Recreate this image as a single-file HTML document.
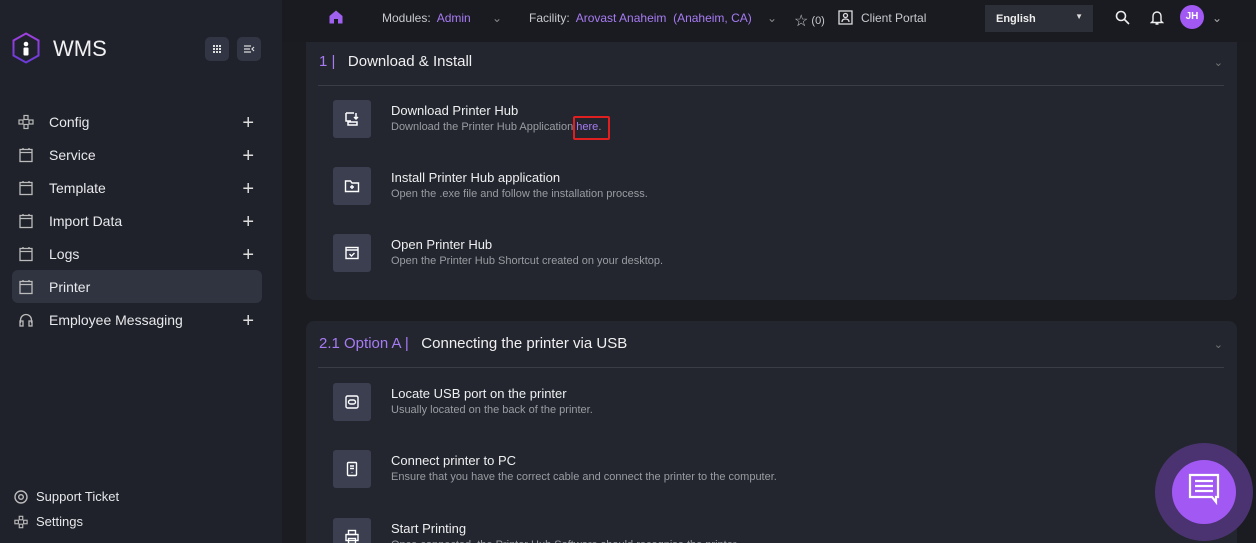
<!DOCTYPE html>
<html style="width:1256px;height:543px;overflow:hidden"><head><style>
*{box-sizing:border-box;margin:0;padding:0}
body{width:1256px;height:543px;overflow:hidden;background:#1b1c21;font-family:"Liberation Sans",sans-serif;color:#e6e7ea;position:relative}
.sb{position:absolute;left:0;top:0;width:282px;height:543px;background:#1f222a}
.logo{position:absolute;left:12px;top:32px}
.wms{position:absolute;left:53px;top:36px;font-size:22px;color:#f1f1f3}
.sbtn{position:absolute;top:37px;width:24px;height:24px;border-radius:5px;background:#323644}
.nav{position:absolute;left:12px;width:250px;height:33px;display:flex;align-items:center;font-size:14px;color:#e8e9ec}
.nav svg{margin-left:6px;margin-right:15px}
.nav .pl{position:absolute;right:8px;top:7px;font-size:20px;color:#ddd;font-weight:300}
.nav.act{background:#303440;border-radius:6px}
.top{position:absolute;left:282px;top:0;width:974px;height:42px;background:#1a1b21}
.tt{position:absolute;top:11px;font-size:12px;color:#c8c9cf;white-space:nowrap}
.pu{color:#a77bf3}
.card{position:absolute;left:306px;width:931px;background:#23262e;border-radius:8px;overflow:hidden}
.ch{position:absolute;left:13px;font-size:15px;color:#f0f0f2}
.div{position:absolute;left:12px;right:13px;height:1px;background:#3a3d46}
.item{position:absolute;left:27px}
.ib{position:absolute;left:0;top:0;width:38px;height:38px;background:#3b3f50;border-radius:3px;display:flex;align-items:center;justify-content:center}
.it{position:absolute;left:58px;top:3px;font-size:13px;color:#eeeff1;white-space:nowrap}
.id{position:absolute;left:58px;top:21px;font-size:11px;color:#9a9ca3;white-space:nowrap}
.chev{position:absolute;right:14px;color:#777;font-size:11px}
</style></head><body>
<div class="sb">
<svg class="logo" width="28" height="32" viewBox="0 0 28 32"><defs><linearGradient id="g" x1="0" y1="0" x2="0" y2="1"><stop offset="0" stop-color="#a040e0"/><stop offset="1" stop-color="#6a3bd8"/></linearGradient></defs><polygon points="14,1.5 26.5,8.5 26.5,23.5 14,30.5 1.5,23.5 1.5,8.5" fill="none" stroke="url(#g)" stroke-width="2"/><circle cx="14" cy="12" r="2.3" fill="#fff"/><rect x="11.5" y="15.5" width="5" height="8" rx="1" fill="#fff"/></svg>
<div class="wms">WMS</div>
<div class="sbtn" style="left:205px"><svg width="24" height="24"><g fill="#ddd"><rect x="8" y="8" width="2" height="2"/><rect x="11" y="8" width="2" height="2"/><rect x="14" y="8" width="2" height="2"/><rect x="8" y="11" width="2" height="2"/><rect x="11" y="11" width="2" height="2"/><rect x="14" y="11" width="2" height="2"/><rect x="8" y="14" width="2" height="2"/><rect x="11" y="14" width="2" height="2"/><rect x="14" y="14" width="2" height="2"/></g></svg></div>
<div class="sbtn" style="left:237px"><svg width="24" height="24"><path d="M7 9h7M7 12h6M7 15h7M17 10l-2 2 2 2" stroke="#ddd" stroke-width="1.2" fill="none"/></svg></div>
<div class="nav" style="top:105px"><svg width="16" height="16" viewBox="0 0 16 16" fill="none" stroke="#bbb" stroke-width="1.2"><rect x="6" y="1.5" width="4" height="4"/><rect x="1" y="6" width="4" height="4"/><rect x="11" y="6" width="4" height="4"/><rect x="6" y="10.5" width="4" height="4"/></svg>Config<span class="pl">+</span></div>
<div class="nav" style="top:138px"><svg width="16" height="16" viewBox="0 0 16 16" fill="none" stroke="#bbb" stroke-width="1.3"><rect x="2" y="2.5" width="12" height="12"/><path d="M2 5.5h12M5 1v2M11 1v2"/></svg>Service<span class="pl">+</span></div>
<div class="nav" style="top:171px"><svg width="16" height="16" viewBox="0 0 16 16" fill="none" stroke="#bbb" stroke-width="1.3"><rect x="2" y="2.5" width="12" height="12"/><path d="M2 5.5h12M5 1v2M11 1v2"/></svg>Template<span class="pl">+</span></div>
<div class="nav" style="top:204px"><svg width="16" height="16" viewBox="0 0 16 16" fill="none" stroke="#bbb" stroke-width="1.3"><rect x="2" y="2.5" width="12" height="12"/><path d="M2 5.5h12M5 1v2M11 1v2"/></svg>Import Data<span class="pl">+</span></div>
<div class="nav" style="top:237px"><svg width="16" height="16" viewBox="0 0 16 16" fill="none" stroke="#bbb" stroke-width="1.3"><rect x="2" y="2.5" width="12" height="12"/><path d="M2 5.5h12M5 1v2M11 1v2"/></svg>Logs<span class="pl">+</span></div>
<div class="nav act" style="top:270px"><svg width="16" height="16" viewBox="0 0 16 16" fill="none" stroke="#bbb" stroke-width="1.3"><rect x="2" y="2.5" width="12" height="12"/><path d="M2 5.5h12M5 1v2M11 1v2"/></svg>Printer</div>
<div class="nav" style="top:303px"><svg width="16" height="16" viewBox="0 0 16 16" fill="none" stroke="#bbb" stroke-width="1.3"><path d="M2.5 11V8a5.5 5.5 0 0 1 11 0v3"/><rect x="2" y="9" width="3" height="5"/><rect x="11" y="9" width="3" height="5"/></svg>Employee Messaging<span class="pl">+</span></div>
<div style="position:absolute;left:14px;top:489px;font-size:13px;display:flex;align-items:center"><svg width="14" height="14" viewBox="0 0 14 14" style="margin-right:8px"><circle cx="7" cy="7" r="6" fill="none" stroke="#bbb" stroke-width="1.4"/><circle cx="7" cy="7" r="2.3" fill="none" stroke="#bbb" stroke-width="1.4"/></svg>Support Ticket</div>
<div style="position:absolute;left:14px;top:514px;font-size:13px;display:flex;align-items:center"><svg width="14" height="14" viewBox="0 0 16 16" fill="none" stroke="#bbb" stroke-width="1.3" style="margin-right:8px"><rect x="6" y="1.5" width="4" height="4"/><rect x="1" y="6" width="4" height="4"/><rect x="11" y="6" width="4" height="4"/><rect x="6" y="10.5" width="4" height="4"/></svg>Settings</div>
</div>

<div class="card" style="top:20px;height:280px">
<div class="ch" style="top:33px"><span class="pu">1 |</span>&nbsp;&nbsp; Download &amp; Install</div>
<span class="chev" style="top:36px">&#8964;</span>
<div class="div" style="top:65px"></div>
<div class="item" style="top:80px"><div class="ib"><svg width="18" height="18" viewBox="0 0 18 18" fill="none" stroke="#fff" stroke-width="1.5"><path d="M3 3h8M3 3v8h5M11 7l2 2 2-2M13 3v6M5 12h9v3H5z"/></svg></div><div class="it">Download Printer Hub</div><div class="id">Download the Printer Hub Application <span class="pu">here</span>.</div></div>
<div class="item" style="top:147px"><div class="ib"><svg width="16" height="16" viewBox="0 0 16 16" fill="none" stroke="#fff" stroke-width="1.4"><path d="M1.5 3h5l1.5 2h6.5v8.5h-13z M8 7v4M6 9h4"/></svg></div><div class="it">Install Printer Hub application</div><div class="id">Open the .exe file and follow the installation process.</div></div>
<div class="item" style="top:214px"><div class="ib"><svg width="16" height="16" viewBox="0 0 16 16" fill="none" stroke="#fff" stroke-width="1.4"><rect x="2" y="2.5" width="12" height="11"/><path d="M2 5h12M5.5 9l2 2 3-3"/></svg></div><div class="it">Open Printer Hub</div><div class="id">Open the Printer Hub Shortcut created on your desktop.</div></div>
</div>
<div style="position:absolute;left:573px;top:116px;width:37px;height:24px;border:2px solid #e02020;border-radius:2px"></div>

<div class="card" style="top:321px;height:222px;border-radius:8px 8px 0 0">
<div class="ch" style="top:14px"><span class="pu">2.1 Option A |</span>&nbsp;&nbsp; Connecting the printer via USB</div>
<span class="chev" style="top:17px">&#8964;</span>
<div class="div" style="top:46px"></div>
<div class="item" style="top:62px"><div class="ib"><svg width="16" height="16" viewBox="0 0 16 16" fill="none" stroke="#fff" stroke-width="1.4"><rect x="2" y="2" width="12" height="12" rx="1.5"/><rect x="4.5" y="6" width="7" height="4" rx="2"/></svg></div><div class="it">Locate USB port on the printer</div><div class="id">Usually located on the back of the printer.</div></div>
<div class="item" style="top:129px"><div class="ib"><svg width="16" height="16" viewBox="0 0 16 16" fill="none" stroke="#fff" stroke-width="1.4"><rect x="3.5" y="1.5" width="9" height="13" rx="1"/><path d="M6 5h4M6 7.5h4M8 11.5v.5"/></svg></div><div class="it">Connect printer to PC</div><div class="id">Ensure that you have the correct cable and connect the printer to the computer.</div></div>
<div class="item" style="top:197px"><div class="ib"><svg width="16" height="16" viewBox="0 0 16 16" fill="none" stroke="#fff" stroke-width="1.4"><rect x="4.5" y="1.5" width="7" height="4"/><rect x="2" y="5.5" width="12" height="6"/><rect x="4.5" y="9.5" width="7" height="5"/></svg></div><div class="it">Start Printing</div><div class="id">Once connected, the Printer Hub Software should recognise the printer.</div></div>
</div>

<div class="top">
<svg style="position:absolute;left:47px;top:10px" width="14" height="14" viewBox="0 0 14 14"><path d="M7 0.5L13.5 6v7.5H9V9H5v4.5H0.5V6z" fill="#a060f0"/></svg>
<div class="tt" style="left:100px">Modules:&nbsp; <span class="pu">Admin</span></div>
<div class="tt" style="left:210px;color:#888">&#8964;</div>
<div class="tt" style="left:247px">Facility:&nbsp; <span class="pu">Arovast Anaheim&nbsp; (Anaheim, CA)</span></div>
<div class="tt" style="left:485px;color:#888">&#8964;</div>
<div class="tt" style="left:512px;font-size:11px"><span style="font-size:16px;vertical-align:-2px">&#9734;</span> (0)</div>
<svg style="position:absolute;left:556px;top:10px" width="15" height="15" viewBox="0 0 15 15" fill="none" stroke="#ddd" stroke-width="1.3"><rect x="1" y="1" width="13" height="13"/><circle cx="7.5" cy="5.5" r="2"/><path d="M4 12c0-2 1.5-3 3.5-3s3.5 1 3.5 3"/></svg>
<div class="tt" style="left:579px">Client Portal</div>
<div style="position:absolute;left:703px;top:5px;width:108px;height:27px;background:#2c2f38"><span style="position:absolute;left:11px;top:8px;font-size:11px;font-weight:bold;color:#eee">English</span><span style="position:absolute;right:10px;top:7px;font-size:8px;color:#ddd">&#9660;</span></div>
<svg style="position:absolute;left:833px;top:10px" width="15" height="15" viewBox="0 0 15 15" fill="none" stroke="#eee" stroke-width="1.6"><circle cx="6" cy="6" r="4.5"/><path d="M9.5 9.5l4.5 4.5"/></svg>
<svg style="position:absolute;left:868px;top:9px" width="14" height="16" viewBox="0 0 14 16" fill="none" stroke="#eee" stroke-width="1.4"><path d="M3 12V7a4 4 0 0 1 8 0v5l1.5 1.5h-11z M5.5 15h3"/></svg>
<div style="position:absolute;left:898px;top:5px;width:24px;height:24px;border-radius:50%;background:#a259f3;font-size:10px;font-weight:bold;color:#fff;text-align:center;line-height:24px">JH</div>
<div class="tt" style="left:930px;color:#aaa">&#8964;</div>
</div>

<div style="position:absolute;left:1155px;top:443px;width:98px;height:98px;border-radius:50%;background:#4b3372"></div>
<div style="position:absolute;left:1172px;top:460px;width:64px;height:64px;border-radius:50%;background:#a259f3"></div>
<svg style="position:absolute;left:1188px;top:473px" width="32" height="32" viewBox="0 0 32 32" fill="none" stroke="#fff" stroke-width="2.2"><path d="M2 2h28v22h-2v5l-4-5H2z"/><path d="M7 8h18M7 13h18M7 18h18"/></svg>
</body></html>
